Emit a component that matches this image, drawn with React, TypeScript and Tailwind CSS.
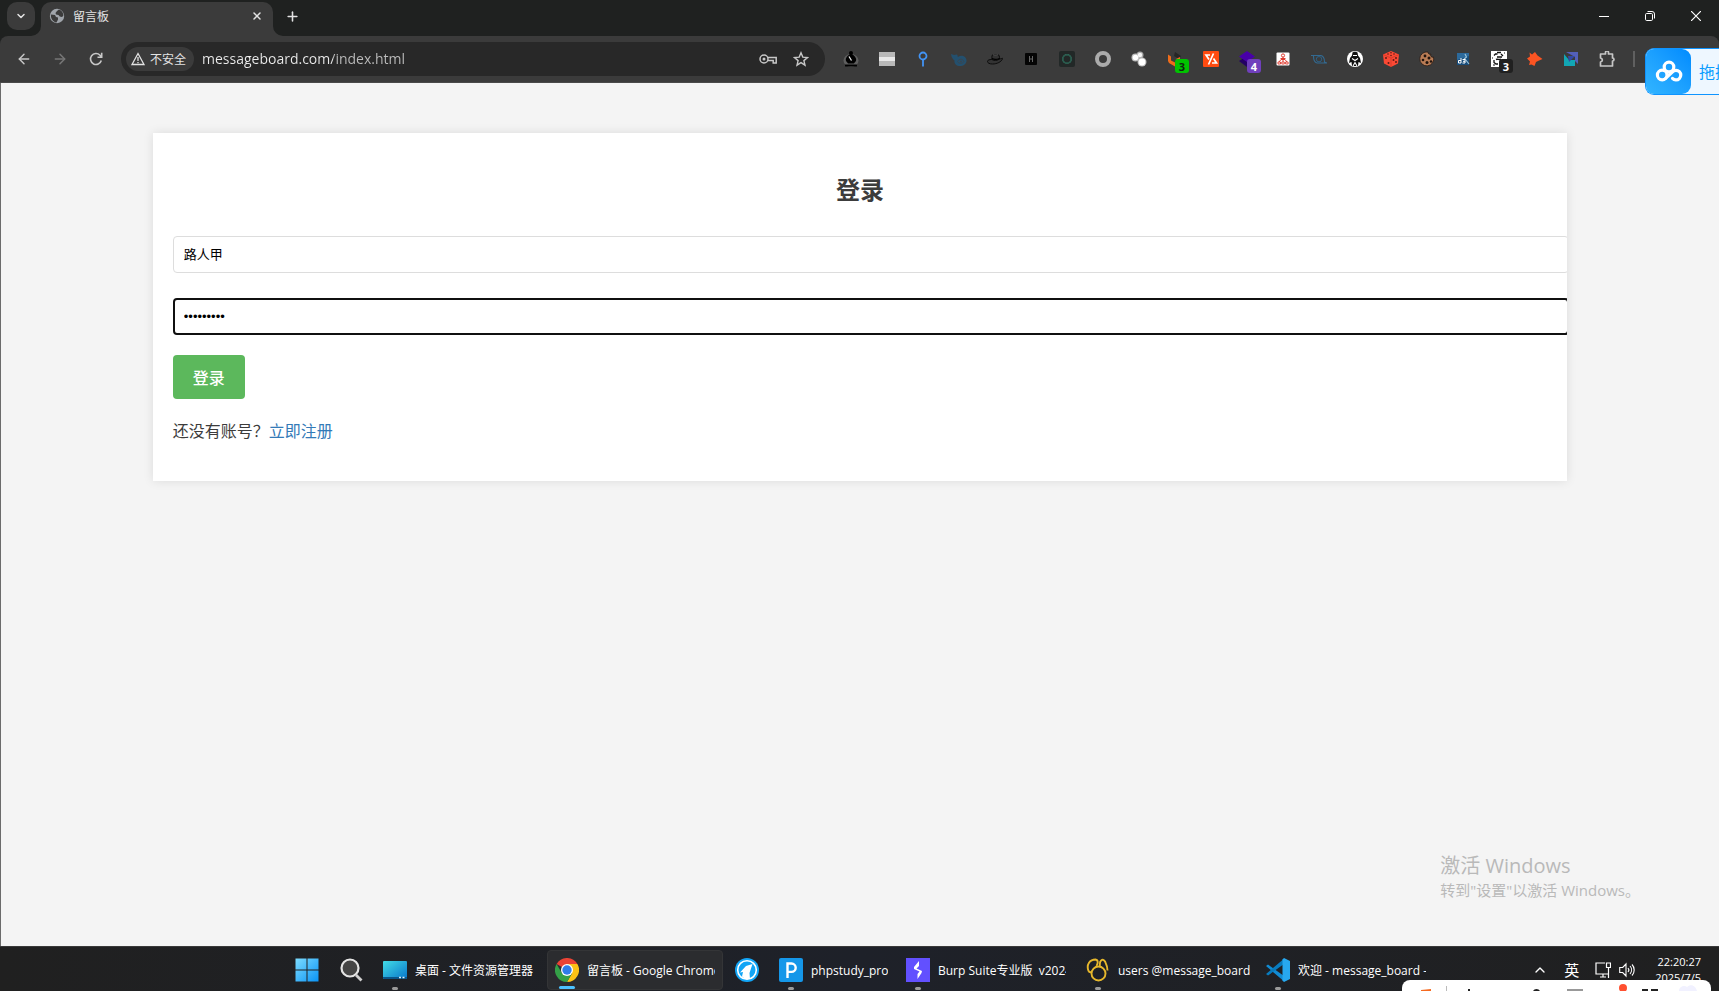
import React from "react";
import { ArrowLeft, ArrowRight, ChevronDown, ChevronUp, Plus, X } from "lucide-react";

const UI_FONT = "font-['Open_Sans','Noto_Sans_CJK_SC',sans-serif]";

function Svg({ size = 16, children, box = 16 }: { size?: number; box?: number; children: React.ReactNode }) {
  return (
    <svg width={size} height={size} viewBox={`0 0 ${box} ${box}`} fill="none" className="shrink-0" aria-hidden="true">
      {children}
    </svg>
  );
}

function Badge({ text, tone }: { text: string; tone: string }) {
  return (
    <span className={`absolute -right-[6px] -bottom-[6px] flex h-[14px] w-[14px] items-center justify-center rounded-[3px] text-[11px] leading-none font-bold ${tone}`}>
      {text}
    </span>
  );
}

type Extension = { name: string; art: React.ReactNode; badge?: { text: string; tone: string } };

const extensions: Extension[] = [
  {
    name: "Bishop",
    art: (
      <>
        <ellipse cx="8" cy="9.5" rx="7.5" ry="6.5" fill="#777" opacity=".6" />
        <circle cx="8" cy="2" r="2" fill="#000" />
        <path d="M8 2.500C11 4 14 7 13 9.800c-.4 1.200-1.500 1.700-2 2.700H5c-.5-1-1.600-1.500-2-2.700C2 7 5 4 8 2.500z" fill="#000" />
        <path d="M6 5.500l2.500 4" stroke="#eee" strokeWidth="1.300" />
        <rect x="2" y="13.500" width="12" height="2" rx=".5" fill="#000" />
      </>
    ),
  },
  {
    name: "Bars",
    art: (
      <>
        <rect y="1" width="16" height="14" fill="#b8b8b8" />
        <rect y="6" width="16" height="4" fill="#e8e8e8" />
      </>
    ),
  },
  {
    name: "Pin",
    art: (
      <>
        <circle cx="8" cy="5" r="3.5" stroke="#4294f5" strokeWidth="1.8" />
        <path d="M8 8v7.500" stroke="#4294f5" strokeWidth="1.8" />
      </>
    ),
  },
  {
    name: "Whale",
    art: (
      <>
        <path d="M0 3l3 1 3-.5c.8 1 .5 2 1 2.500 3-2.500 8.500-1 8.500 3.500 0 3.500-3 5.500-6.500 5.500C5.500 15 3 13 3.500 9.500 2 8 .5 7 0 3z" fill="#24506e" />
        <path d="M6.500 10.500c1.500-3 5.500-3 6.500 0-1.500 2.500-5 2.500-6.500 0z" stroke="#3a4650" />
        <circle cx="10" cy="10.5" r="1" fill="#3a4650" />
      </>
    ),
  },
  {
    name: "Hat",
    art: (
      <>
        <path d="M.5 10.500c0-1.500 2-2 4-2l8-.5c2-.3 3.500-1.300 3-.2-1 3-5.500 5.200-10 5.200-3 0-5-1-5-2.500z" fill="#333" stroke="#0c0c0c" />
        <path d="M5 8.500C4.700 5.500 5 4 6 3.500c1.500.6 3.500.4 5 0 1 .5 1.700 2 1.500 4.500-2 1.800-6 2-7.500.5z" fill="#333" stroke="#0c0c0c" />
        <path d="M5 7.500c2 1.200 5 1 7.500 0" stroke="#000" strokeWidth="1.300" />
        <path d="M6 3.500c1.500 1 3.500.8 5 0" stroke="#777" strokeWidth=".6" />
      </>
    ),
  },
  {
    name: "H",
    art: (
      <>
        <rect x="2" y="2" width="12" height="12" rx="1" fill="#050505" />
        <path d="M6.500 5v6M9.500 5v6M6.500 8h3" stroke="#666" />
      </>
    ),
  },
  {
    name: "Knot",
    art: (
      <>
        <rect width="16" height="16" rx="2" fill="#222827" />
        <circle cx="8" cy="8" r="4.3" stroke="#347261" strokeWidth="1.3" />
        <path d="M4.500 4.500h7v7h-7zM8 3l5 5-5 5-5-5z" stroke="#285649" strokeWidth=".7" />
      </>
    ),
  },
  { name: "Ring", art: <circle cx="8" cy="8" r="6" stroke="#ababab" strokeWidth="4" /> },
  {
    name: "Bubbles",
    art: (
      <>
        <circle cx="9" cy="4" r="3.5" fill="#aaa" />
        <circle cx="4.5" cy="6.5" r="4" fill="#bdbdbd" />
        <circle cx="11" cy="11" r="4.5" fill="#bbb" />
        <circle cx="4.5" cy="6.5" r="2.8" fill="#fff" />
        <circle cx="9" cy="4" r="2.2" fill="#f4f4f4" />
        <circle cx="11" cy="11" r="3.4" fill="#fff" />
      </>
    ),
  },
  {
    name: "Check",
    art: (
      <>
        <path d="M1 3.500l3 2v4l4 2v4l-6-3.500-1-2z" fill="#ef6c1a" />
        <path d="M8 1l6 4-2 3-5-3z" fill="#262626" />
        <path d="M9 8l4-2v5z" fill="#ef6c1a" />
      </>
    ),
    badge: { text: "3", tone: "bg-[#00c400] text-[#102610]" },
  },
  {
    name: "Slash",
    art: (
      <>
        <rect width="16" height="16" rx="1" fill="#ff4b10" />
        <path d="M10.500 2.500l-5 11M7 4H3l3 4.500M9 12h4.500L10.500 7.500" stroke="#fff" strokeWidth="1.7" />
      </>
    ),
  },
  {
    name: "Layers",
    art: (
      <>
        <path d="M8 5l8 5-8 6-8-6z" fill="#240064" />
        <path d="M8 0l8 5.500L8 11 0 5.500z" fill="#4800a9" />
      </>
    ),
    badge: { text: "4", tone: "bg-[#7040bc] text-white" },
  },
  {
    name: "Tree",
    art: (
      <>
        <rect x="1.5" y="1.5" width="13" height="13" rx="1" fill="#fff" />
        <circle cx="8" cy="4.5" r="1.6" stroke="#df3c31" />
        <path d="M8 6v5M4 11l2-2.500h4l2 2.500M5.500 7.500h5" stroke="#df3c31" />
        <path d="M3 11h2.500v2H3zM6.800 11h2.500v2H6.800zM10.600 11h2.500v2h-2.500z" stroke="#df3c31" strokeWidth=".9" />
      </>
    ),
  },
  {
    name: "Eye",
    art: (
      <>
        <path d="M0 4.500h10c2 .5 3.500 3 3.500 6.500L16 12H6C3.500 11.500 2.500 8.500 2.500 5" stroke="#336a91" strokeWidth="1.1" />
        <circle cx="8" cy="8.200" r="2.7" stroke="#2d6187" />
      </>
    ),
  },
  {
    name: "Guard",
    art: (
      <>
        <circle cx="8" cy="8" r="8" fill="#fff" />
        <path d="M5.500 1.500c1-1 4-1 5 0l.5 3 2 2.500 1 5-2.500-1L11 15H5l-.5-4L2 12l1-5 2-2.500z" fill="#111" />
        <path d="M6 4.500h4M5 7.500l3 2 3-2M6 15l2-3.500 2 3.500" stroke="#fff" strokeWidth="1.1" />
      </>
    ),
  },
  {
    name: "Dice",
    art: (
      <>
        <path d="M8 0l8 3.500-1 9L8 16l-7-3.500-1-9z" fill="#fb4934" />
        <path d="M0 3.500L8 7l8-3.500M8 7v9" stroke="#c23225" strokeWidth=".6" />
        <g fill="#5e1b15">
          <circle cx="5" cy="3" r=".8" /><circle cx="8" cy="4.5" r=".8" /><circle cx="11" cy="3" r=".8" /><circle cx="8" cy="1.7" r=".8" />
          <circle cx="3" cy="7" r="1" /><circle cx="5.5" cy="12" r="1" /><circle cx="10.5" cy="9" r="1" /><circle cx="13" cy="11" r="1" /><circle cx="13" cy="7" r="1" />
        </g>
      </>
    ),
  },
  {
    name: "Cookie",
    art: (
      <>
        <path d="M9 1a2 2 0 0 0 3 2 2 2 0 0 0 2.500 3A7 7 0 1 1 9 1z" fill="#b97c55" stroke="#291c15" strokeWidth=".8" />
        <g fill="#21140e">
          <circle cx="6" cy="5" r="1.4" /><circle cx="10" cy="7" r="1.5" /><circle cx="4" cy="9" r="1.3" /><circle cx="8" cy="11.500" r="1.5" /><circle cx="12" cy="10.500" r="1.2" />
        </g>
      </>
    ),
  },
  {
    name: "Decoder",
    art: (
      <>
        <rect x="2" y="2" width="12" height="12" fill="#174c7a" />
        <path d="M2 2h12v3L2 9z" fill="#2c6a9c" />
        <path d="M10 3l1.500 3L9 8M10 8l4 5" stroke="#9ac1d8" strokeWidth="1.200" />
        <path d="M6 7v5M6 9.500H3.500V12H6M7.500 8.500H10V12H7.500M8 10.300h2" stroke="#fff" />
      </>
    ),
  },
  {
    name: "Scan",
    art: (
      <>
        <rect width="16" height="16" fill="#fff" />
        <path d="M3 4.500L4.500 3h2M10 3l2 2M3 9v2.500L5 13h2" stroke="#111" strokeWidth="1.300" />
        <path d="M6 1.500h4M6 6h5M5 8.500c2-1 3 1 5-.5" stroke="#111" strokeWidth="1.500" />
        <path d="M1 7h1M13 2h1M2 14h2" stroke="#111" />
      </>
    ),
    badge: { text: "3", tone: "bg-[#202020] text-white" },
  },
  {
    name: "Fox",
    art: <path d="M2.500 1.500L5 3.500 8 1l2.500 3.500L15.500 8 11 10l-2 1-1.500 4-3-1.500-2.500.5 1-3.500L0 7.500l3-2z" fill="#fb5422" />,
  },
  {
    name: "Tiles",
    art: (
      <>
        <path d="M1 3l5 6h6v6H1z" fill="#12a6b4" />
        <path d="M3 1h12v12l-3-3V6z" fill="#5360b9" />
        <path d="M5 5h7l-6 6z" fill="#3349a5" />
      </>
    ),
  },
  {
    name: "扩展程序",
    art: (
      <path d="M1.500 3h5V1.500a1.500 1.500 0 0 1 3 0V3h4v4a1.500 1.500 0 0 1 0 3v5h-12v-4C4 10.500 4 7.500 1.500 7z" stroke="#c7c7c7" strokeWidth="1.7" strokeLinejoin="round" />
    ),
  },
];

function TabStrip() {
  return (
    <header className="flex h-9 shrink-0 items-start bg-[#1f2120] pl-[7px] text-[#e3e3e3]">
      <button aria-label="搜索标签页" className="mt-[2px] flex h-7 w-7 items-center justify-center rounded-[10px] bg-[#3b3b3b]">
        <ChevronDown size={12} strokeWidth={3} />
      </button>
      <div className="relative ml-[6px] mt-[2px] flex h-[34px] w-[232px] items-center rounded-t-[10px] bg-[#3b3b3b] pb-[6px] pl-2 pr-[10px]">
        <svg className="absolute bottom-0 -left-[10px]" width="10" height="10" aria-hidden="true"><path d="M10 0v10H0A10 10 0 0 0 10 0z" fill="#3b3b3b" /></svg>
        <svg className="absolute bottom-0 -right-[10px]" width="10" height="10" aria-hidden="true"><path d="M0 0v10h10A10 10 0 0 1 0 0z" fill="#3b3b3b" /></svg>
        <Svg>
          <circle cx="8" cy="8" r="7.200" fill="#a0a5ab" />
          <path d="M2 6.500l4 .5 1 2 2 .5v2l-1.500 3C4 14 1.300 10 2 6.500zM8 3l2-1.500c3 1 4.500 3.500 4.300 6.500l-1.500 1-2-.5L9.500 7l-2.500-.5L6.500 5z" fill="#3b3b3b" />
        </Svg>
        <span className="ml-2 flex-1 pt-[2px] text-[12px] leading-4">留言板</span>
        <button aria-label="关闭标签页"><X size={12} strokeWidth={3} /></button>
      </div>
      <button aria-label="新标签页" className="ml-3 mt-[9px]"><Plus size={15} strokeWidth={2.5} /></button>
      <div className="ml-auto flex h-8 items-center text-white">
        <button aria-label="最小化" className="flex w-[46px] justify-center"><Svg size={10} box={10}><path d="M0 5.500h10" stroke="currentColor" /></Svg></button>
        <button aria-label="还原" className="flex w-[46px] justify-center"><Svg size={10} box={10}><rect x=".5" y="2.5" width="7" height="7" rx="1.2" stroke="currentColor" /><path d="M2.500.5H7A2.500 2.500 0 0 1 9.500 3v4.500" stroke="currentColor" /></Svg></button>
        <button aria-label="关闭" className="flex w-[46px] justify-center"><Svg size={10} box={10}><path d="M0 0l10 10M10 0L0 10" stroke="currentColor" strokeWidth="1.2" /></Svg></button>
      </div>
    </header>
  );
}

function Toolbar() {
  return (
    <div className="relative z-10 bg-[#1f2120]">
      <div className="relative flex h-[47px] items-center rounded-t-lg border-b border-[#4a4a4a] bg-[#3b3b3b] pl-4">
        <nav className="flex items-center gap-5 text-[#c7c7c7]">
          <button aria-label="后退"><ArrowLeft size={16} strokeWidth={2.2} /></button>
          <button aria-label="前进" className="text-[#777]"><ArrowRight size={16} strokeWidth={2.2} /></button>
          <button aria-label="重新加载">
            <Svg><path d="M13.300 9.500A5.500 5.500 0 1 1 12 4.200L13.500 6M13.700 1.800v4.400H9.500" stroke="currentColor" strokeWidth="1.6" /></Svg>
          </button>
        </nav>
        <div className="ml-[17px] flex h-[34px] min-w-0 flex-1 items-center rounded-full bg-[#282828] pl-[5px] pr-4">
          <button className="flex h-6 shrink-0 items-center gap-1 rounded-full bg-[#3b3b3b] pl-1 pr-2 text-[12px] text-[#e3e3e3]">
            <Svg><path d="M8 2.500L14 13.500H2z" stroke="currentColor" strokeWidth="1.3" /><path d="M8 6v4M8 11v1.300" stroke="currentColor" strokeWidth="1.3" /></Svg>
            <span className="pt-px">不安全</span>
          </button>
          <input
            aria-label="地址"
            defaultValue="messageboard.com/index.html"
            className="ml-2 min-w-0 flex-1 bg-[linear-gradient(90deg,#ececec_131px,#bdbdbd_131px)] bg-clip-text text-[14px] leading-5 text-transparent outline-none"
          />
          <div className="flex items-center gap-4 text-[#c7c7c7]">
            <button aria-label="管理密码"><Svg size={18} box={18}><circle cx="5" cy="9" r="4" stroke="currentColor" strokeWidth="1.5" /><circle cx="5" cy="9" r="1.5" fill="currentColor" /><path d="M9 7.500h8.200V13h-3v-2.500H9" stroke="currentColor" strokeWidth="1.5" /></Svg></button>
            <button aria-label="添加书签"><Svg><path d="M8 1.800l1.800 4.300 4.700.4-3.600 3.100 1.100 4.600L8 11.700l-4 2.500 1.100-4.600-3.600-3.100 4.700-.4z" stroke="currentColor" strokeWidth="1.4" /></Svg></button>
          </div>
        </div>
        <div className="ml-[18px] flex shrink-0 items-center gap-5">
          {extensions.map((e) => (
            <button key={e.name} aria-label={e.name} className="relative">
              <Svg>{e.art}</Svg>
              {e.badge && <Badge text={e.badge.text} tone={e.badge.tone} />}
            </button>
          ))}
        </div>
        <div className="ml-[18px] mr-[84px] h-4 w-[2px] bg-[#606060]" />
        <button className="absolute right-0 top-3 flex h-[47px] w-[74px] overflow-hidden rounded-l-[9px] border border-r-0 border-[#0f94ff] bg-[#eef7ff] text-[16px] text-[#079cff]">
          <span className="flex h-full w-[45px] shrink-0 items-center justify-center rounded-r-[9px] bg-linear-to-tr from-[#32b5ff] to-[#008bff]">
            <Svg size={28} box={28}>
              <g stroke="#fff" strokeWidth="3.2" strokeLinecap="round">
                <circle cx="14" cy="9" r="4.8" />
                <circle cx="7.2" cy="17" r="4.800" />
                <path d="M10.800 20.200L17.500 13.800A4.800 4.800 0 1 1 17.500 20.400" />
              </g>
            </Svg>
          </span>
          <span className="ml-[8px] self-center whitespace-nowrap">拖拽</span>
        </button>
      </div>
    </div>
  );
}

function LoginPage() {
  return (
    <main className="relative flex-1 border-l border-[#6b6b6b] bg-[#f4f4f4] pt-[50px] text-[16px] text-[#3c3c3c] font-['Noto_Sans_CJK_SC',sans-serif]">
      <form className="mx-auto box-content w-4/5 overflow-hidden bg-white p-5 shadow-[0_0_10px_rgba(0,0,0,0.1)]" onSubmit={(e) => e.preventDefault()}>
        <h2 className="mt-[18px] mb-[29px] text-center text-[24px] leading-9 font-bold">登录</h2>
        <input aria-label="用户名" defaultValue="路人甲" className="block h-[37px] w-[calc(100%+22px)] rounded border border-[#ddd] px-[10px] pb-[2px] text-[13px] text-black" />
        <input aria-label="密码" type="password" defaultValue="password1" className="mt-[25px] block h-[37px] w-[calc(100%+22px)] rounded border-2 border-[#101010] px-[9px] font-['Liberation_Sans',sans-serif] text-[13px] text-black outline-none" />
        <button type="submit" className="mt-5 h-11 rounded bg-[#5cb85c] px-5 text-[16px] font-medium text-white">登录</button>
        <p className="mt-[18px] mb-[18px] leading-[26px]">还没有账号？<a href="#register" className="text-[#337ab7]">立即注册</a></p>
      </form>
      <aside className={`absolute right-[79px] bottom-[45px] text-[#b9b9b9] ${UI_FONT}`}>
        <p className="text-[20px] leading-[26px]">激活 Windows</p>
        <p className="text-[15px] leading-[22px]">转到"设置"以激活 Windows。</p>
      </aside>
    </main>
  );
}

type Task = { label?: string; name: string; width: string; art: React.ReactNode; mark?: "idle" | "active" };

const tasks: Task[] = [
  {
    name: "开始",
    width: "w-10 px-2",
    art: (
      <>
        <defs><linearGradient id="win" x1="0" y1="0" x2="1" y2="1"><stop stopColor="#7ddcff" /><stop offset="1" stopColor="#0a93f5" /></linearGradient></defs>
        <path d="M.5.5h11v11H.5zM12.500.5h11v11h-11zM.5 12.500h11v11H.5zM12.500 12.500h11v11h-11z" fill="url(#win)" />
      </>
    ),
  },
  {
    name: "搜索",
    width: "w-10 px-2",
    art: (
      <>
        <circle cx="11" cy="10" r="8.5" fill="#454545" stroke="#e4e4e4" strokeWidth="2.2" />
        <path d="M17 17l5.500 5.500" stroke="#d0d0d0" strokeWidth="2.8" />
      </>
    ),
  },
  {
    name: "文件资源管理器",
    label: "桌面 - 文件资源管理器",
    width: "w-[168px] px-2",
    mark: "idle",
    art: (
      <>
        <defs><linearGradient id="desk" x1="0" y1="0" x2="1" y2="1"><stop stopColor="#42dce6" /><stop offset="1" stopColor="#0875c9" /></linearGradient></defs>
        <rect y="3" width="24" height="18" rx="1" fill="url(#desk)" />
        <path d="M0 19h24v1a1 1 0 0 1-1 1H1a1 1 0 0 1-1-1z" fill="#095589" />
        <path d="M16 19.500h2M19.500 19.500h2" stroke="#d9f2ff" strokeWidth="1.5" />
      </>
    ),
  },
  {
    name: "Chrome",
    label: "留言板 - Google Chrome",
    width: "w-[176px] border border-[#343537] bg-[#2b2c2f] px-[7px]",
    mark: "active",
    art: (
      <>
        <path d="M12 12L1.600 6A12 12 0 0 1 22.400 6H12z" fill="#ea4335" />
        <path d="M12 6h10.400A12 12 0 0 1 12 24l5.200-9z" fill="#fbc116" />
        <path d="M1.600 6l5.200 9L12 18l5.200-3L12 24A12 12 0 0 1 1.600 6z" fill="#34a047" />
        <circle cx="12" cy="12" r="6" fill="#fff" />
        <circle cx="12" cy="12" r="4.700" fill="#2f7de9" />
      </>
    ),
  },
  {
    name: "浏览器",
    width: "w-10 px-2",
    art: (
      <>
        <circle cx="12" cy="12" r="12" fill="#12a5f6" />
        <circle cx="12" cy="12" r="9.3" stroke="#fff" strokeWidth="1.6" />
        <path d="M17.500 6L11 8l-6 6.500 3-.5-1 4.500 3 2.500h5l-.5-6z" fill="#fff" />
      </>
    ),
  },
  {
    name: "phpstudy",
    label: "phpstudy_pro",
    width: "w-[123px] pl-2",
    mark: "idle",
    art: (
      <>
        <rect width="24" height="24" rx="2" fill="#1597e9" />
        <path d="M8.500 20V5.500h4a4.200 4.200 0 0 1 0 8.400h-4" stroke="#fff" strokeWidth="2.4" />
      </>
    ),
  },
  {
    name: "Burp Suite",
    label: "Burp Suite专业版  v2024.5",
    width: "w-[176px] px-2",
    mark: "idle",
    art: (
      <>
        <rect width="24" height="24" fill="#6250ff" />
        <path d="M13 3v5l-2.500 2.500L16 13l-.5 2-4 6v-5l2-2.500L8 11v-2z" fill="#fff" />
      </>
    ),
  },
  {
    name: "Navicat",
    label: "users @message_board",
    width: "w-[176px] pl-2",
    mark: "idle",
    art: (
      <g stroke="#e7b82c" strokeWidth="1.9">
        <circle cx="12.500" cy="15.500" r="7" />
        <path d="M2.500 13C0 6.500 4 1.500 9.500 1.500c3 .5 2.500 4 1 6.500M14 8c-1-6 3-8 5-4.500 1.500 3 2.500 4.500 2.500 9M2.500 13c.5 1 2 1.500 3.500 1" />
      </g>
    ),
  },
  {
    name: "VS Code",
    label: "欢迎 - message_board - Visual Studio Code",
    width: "w-[176px] px-2",
    mark: "idle",
    art: (
      <>
        <path d="M0 8l2-1.500L18 18v5.500L16.500 22z" fill="#118bd3" />
        <path d="M0 16l2 1.500L18 6V.5L16.500 2z" fill="#087bbe" />
        <path d="M16.500 1.500L18 0l6 3v18l-6 3-1.500-1.500z" fill="#27a8ef" />
      </>
    ),
  },
];

function Taskbar() {
  return (
    <footer className="relative grid h-[45px] shrink-0 grid-cols-[1fr_auto_1fr] overflow-hidden border-t border-[#393939] bg-linear-to-r from-[#202020] via-[#1e2129] to-[#202020] pl-[2px] text-white">
      <div />
      <div className="flex gap-1 pt-[3px]">
        {tasks.map((t) => (
          <button
            key={t.name}
            aria-label={t.name}
            className={`relative flex h-10 items-center gap-2 overflow-hidden rounded ${t.width}`}
          >
            <Svg size={24} box={24}>{t.art}</Svg>
            {t.label && <span className="overflow-hidden pt-[2px] text-[12px] leading-5 whitespace-pre">{t.label}</span>}
            {t.mark && <span className={`absolute bottom-0 h-[3px] rounded-full ${t.mark === "active" ? "left-[11px] w-4 bg-[#4cc2ff]" : "left-[17px] w-[6px] bg-[#9a9a9a]"}`} />}
          </button>
        ))}
      </div>
      <div className="flex items-start justify-end pr-[18px]">
        <button aria-label="显示隐藏的图标" className="mt-[15px] mr-4"><ChevronUp size={16} strokeWidth={2} /></button>
        <button className="mt-[11px] mr-4 text-[15px] leading-6">英</button>
        <button aria-label="网络和声音" className="mt-[15px] mr-5 flex gap-2">
          <Svg><path d="M10 1H1v11h12M5 15h6M8 12v3M11.500 1h4v4.500h-4zM13.500 6v10" stroke="currentColor" strokeWidth="1.2" /></Svg>
          <Svg><path d="M.7 5.500h3L7 2v12L3.700 10.500h-3zM9 6a3 3 0 0 1 0 4M11 4a6 6 0 0 1 0 8M13 2.500a8 8 0 0 1 0 11" stroke="currentColor" strokeWidth="1.1" /></Svg>
        </button>
        <time className="mt-[7px] text-right text-[11px] leading-4">22:20:27<br />2025/7/5</time>
      </div>
      <div className="absolute right-2 bottom-0 h-[11px] w-[309px] overflow-hidden rounded-t-lg bg-white">
        <svg width="309" height="11" aria-hidden="true">
          <path d="M19 10l10-1v2H19z" fill="#f56a20" />
          <path d="M44.500 6v5" stroke="#bbb" />
          <path d="M66 9h2v2h-2zM131 11a4 4 0 0 1 7 0zM240 9h6v2h-6zM249 9h7v2h-7z" fill="#222" />
          <path d="M165 9h16v2h-16z" fill="#999" />
          <circle cx="221" cy="8" r="4" fill="#ff5030" />
          <path d="M277 11c0-5 6-6 8-4 4-4 9-1 10 4z" fill="#f1f1ff" />
        </svg>
      </div>
    </footer>
  );
}

export default function App() {
  return (
    <div className={`flex min-h-screen flex-col overflow-hidden ${UI_FONT}`}>
      <TabStrip />
      <Toolbar />
      <LoginPage />
      <Taskbar />
    </div>
  );
}
